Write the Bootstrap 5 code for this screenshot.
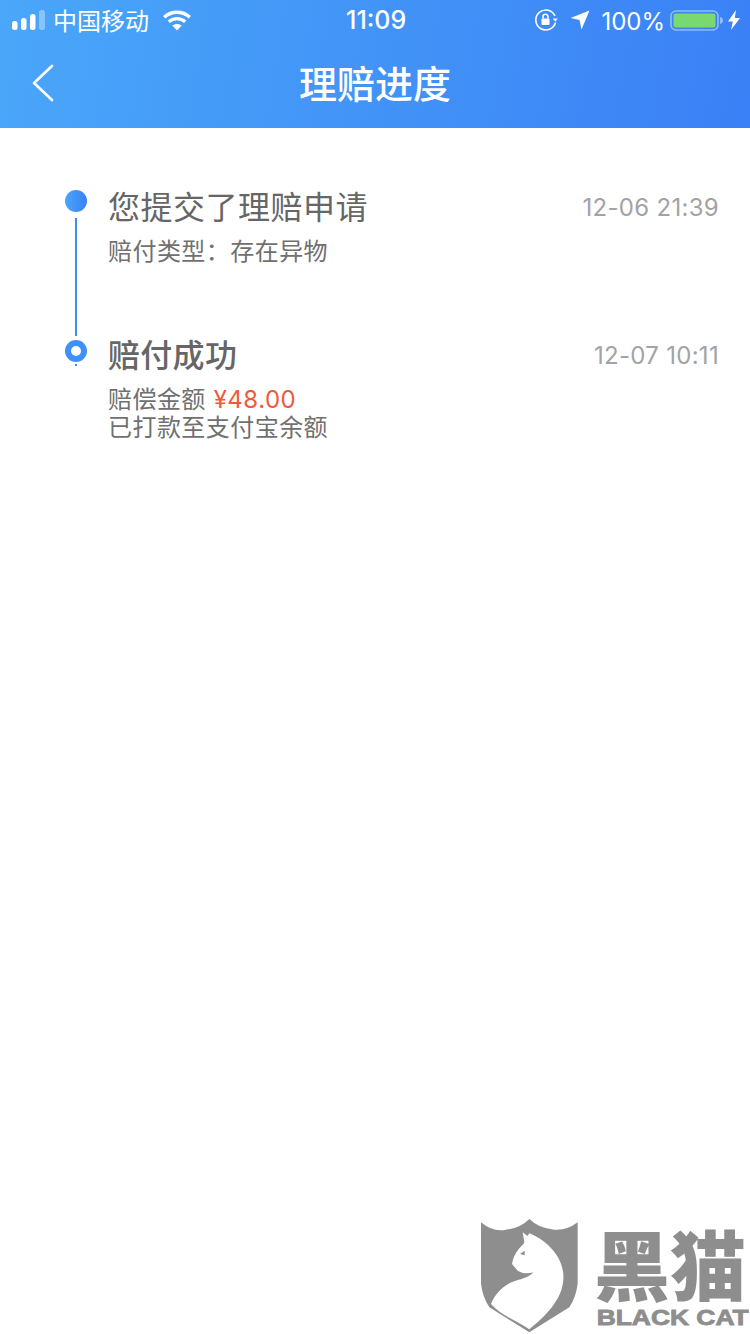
<!DOCTYPE html>
<html lang="zh">
<head>
    <meta charset="utf-8">
    <title>理赔进度</title>
    <link href="https://cdn.jsdelivr.net/npm/bootstrap@5.3.3/dist/css/bootstrap.min.css" rel="stylesheet">
    <style>
        body { width: 750px; height: 1334px; overflow: hidden; background: #fff; font-family: "Noto Sans CJK SC", "Liberation Sans", sans-serif; }
        .top-head { height: 128px; background: linear-gradient(100deg, #4aa7f9, #3a80f6); color: #fff; }
        .status-row { height: 40px; padding: 0 10px 0 12px; font-size: 24px; }
        .status-num { font-family: "Inter", "Liberation Sans", sans-serif; font-size: 24px; margin: 4px 0 0 11px; }
        .status-time { font-family: "Inter", "Liberation Sans", sans-serif; font-size: 25px; font-weight: 500; left: 346px; top: 4px; line-height: 32px; }
        .carrier { margin-left: 8px; margin-right: 14px; line-height: 38px; }
        .icon-arrow { margin-left: 11px; }
        .icon-battery { margin-left: 5px; }
        .icon-bolt { margin-left: 4px; }
        .title-row { height: 88px; }
        .back-btn { left: 32px; top: 64px; }
        .page-title { font-size: 38px; font-weight: 500; line-height: 84px; }
        .steps { padding: 62px 31px 0 65px; }
        .rail { width: 22px; margin-right: 21px; }
        .dot-full { width: 22px; height: 22px; border-radius: 50%; background: linear-gradient(90deg, #4aa7f9, #3a80f6); }
        .dot-ring { width: 22px; height: 22px; border-radius: 50%; background: #fff; border: 6px solid #3f90f7; }
        .rail-line { width: 2px; height: 118px; margin: 6px 0 4px; background: #3f8cf6; }
        .rail-tick { width: 2px; height: 2px; margin-top: 2px; background: #3f8cf6; }
        .step-title { font-size: 32px; line-height: 30px; color: #666; letter-spacing: .5px; }
        .step-title-done { font-weight: 500; line-height: 26px; letter-spacing: .3px; }
        .step-time { font-family: "Inter", "Liberation Sans", sans-serif; font-size: 24px; letter-spacing: .3px; color: #a3a3a3; }
        .time-first { line-height: 36px; }
        .time-done { line-height: 32px; }
        .step-sub { font-size: 24px; line-height: 28px; color: #707070; letter-spacing: .45px; }
        .sub-first { margin-top: 10px; }
        .sub-done { margin-top: 12px; }
        .step-first { height: 150px; }
        .money { color: #ee5a3c; font-family: "Inter", "Liberation Sans", sans-serif; line-height: 1; letter-spacing: .5px; margin-left: 2px; }
        .wm-box { right: 0; bottom: 0; }
        .wm-cn { font-family: "Noto Sans CJK SC", sans-serif; font-weight: 900; font-size: 228px; fill: #8e8e8e; }
        .wm-en { font-family: "Liberation Sans", sans-serif; font-weight: 700; font-size: 66px; fill: #8e8e8e; stroke: #8e8e8e; stroke-width: 2.5px; }
    </style>
</head>
<body class="position-relative">
    <div class="top-head position-relative">
        <div class="status-row d-flex align-items-center">
            <svg width="33" height="20" viewBox="0 0 33 20" fill="#fff">
                <rect x="0" y="11" width="5.5" height="9" rx="2.5"/>
                <rect x="9" y="8" width="5.5" height="12" rx="2.5"/>
                <rect x="18" y="4" width="5.5" height="16" rx="2.5"/>
                <rect x="27" y="0" width="6" height="20" rx="2.5" opacity=".35"/>
            </svg>
            <span class="carrier">中国移动</span>
            <svg width="28" height="21" viewBox="0 0 28 21" fill="none" stroke="#fff" stroke-width="3.4">
                <path d="M1.2 7.2C8.5.6 19.5.6 26.8 7.2"/>
                <path d="M5.8 11.8c4.700-4.200 11.700-4.200 16.400 0"/>
                <path d="M14 20.500l-4.700-4.900c2.700-2.300 6.700-2.300 9.400 0z" fill="#fff" stroke="none"/>
            </svg>
            <div class="ms-auto d-flex align-items-center">
                <svg width="24" height="22" viewBox="0 0 24 22" fill="none" stroke="#fff" stroke-width="1.6">
                    <path d="M20.500 13.500A10 10 0 1 1 20 7"/>
                    <path d="M17.800 9.500h5l-2.500 3.200z" fill="#fff" stroke="none"/>
                    <rect x="6.500" y="9.500" width="8" height="6.500" rx="1" fill="#fff" stroke="none"/>
                    <path d="M8 9.500V7.800a2.500 2.500 0 0 1 5 0v1.700"/>
                </svg>
                <svg class="icon-arrow" width="20" height="20" viewBox="0 0 20 20" fill="#fff">
                    <path d="M19.500.5L11.500 19.500 9.500 10 .5 8z"/>
                </svg>
                <span class="status-num">100%</span>
                <svg class="icon-battery" width="54" height="22" viewBox="0 0 54 22">
                    <rect x="1" y="2" width="47" height="19" rx="5" fill="none" stroke="#8fbdfb" stroke-width="1.6"/>
                    <rect x="3.500" y="4.500" width="42" height="14" rx="2.500" fill="#79d970"/>
                    <path d="M50 8c2 .3 3 1.600 3 3.500S52 14.700 50 15z" fill="#8fbdfb"/>
                </svg>
                <svg class="icon-bolt" width="12" height="20" viewBox="0 0 12 20" fill="#fff">
                    <path d="M8 0L0 11.500h4.800L3 20 12 8H6.800z"/>
                </svg>
            </div>
        </div>
        <span class="status-time position-absolute">11:09</span>
        <div class="title-row text-center">
            <svg class="back-btn position-absolute" width="22" height="38" viewBox="0 0 22 38" fill="none" stroke="#fff" stroke-width="2.6" stroke-linecap="round" stroke-linejoin="round">
                <path d="M20 2L2 19l18 17"/>
            </svg>
            <div class="page-title">理赔进度</div>
        </div>
    </div>

    <div class="steps">
        <div class="d-flex step-first">
            <div class="rail d-flex flex-column align-items-center">
                <div class="dot-full flex-shrink-0"></div>
                <div class="rail-line flex-shrink-0"></div>
            </div>
            <div class="flex-grow-1">
                <div class="d-flex justify-content-between">
                    <div class="step-title">您提交了理赔申请</div>
                    <div class="step-time time-first">12-06 21:39</div>
                </div>
                <div class="step-sub sub-first">赔付类型：存在异物</div>
            </div>
        </div>
        <div class="d-flex">
            <div class="rail d-flex flex-column align-items-center">
                <div class="dot-ring flex-shrink-0"></div>
                <div class="rail-tick flex-shrink-0"></div>
            </div>
            <div class="flex-grow-1">
                <div class="d-flex justify-content-between">
                    <div class="step-title step-title-done">赔付成功</div>
                    <div class="step-time time-done">12-07 10:11</div>
                </div>
                <div class="step-sub sub-done">赔偿金额 <span class="money">¥48.00</span></div>
                <div class="step-sub">已打款至支付宝余额</div>
            </div>
        </div>
    </div>

    <svg class="wm-box position-absolute" width="280" height="124" viewBox="0 0 840 372">
        <path d="M33 37Q70 68 108 59Q150 55 178 27Q206 55 253 59Q290 62 323 37L323 222Q318 262 298 292L178 367L58 292Q38 262 33 222Z" fill="#8e8e8e"/>
        <path d="M158 67L172 78L178 70C225 88 285 140 280 208C277 270 225 320 178 358C140 332 90 315 63 282C75 250 105 222 135 213C160 206 180 200 190 187C175 192 155 190 143 182L126 162C128 148 135 130 148 115C158 105 163 100 163 97Z" fill="#fff"/>
        <path d="M150 132l14-10v14z" fill="#8e8e8e"/>
        <text class="wm-cn" x="372" y="256">黑猫</text>
        <text class="wm-en" x="380" y="345" textLength="456" lengthAdjust="spacingAndGlyphs">BLACK CAT</text>
    </svg>
</body>
</html>
